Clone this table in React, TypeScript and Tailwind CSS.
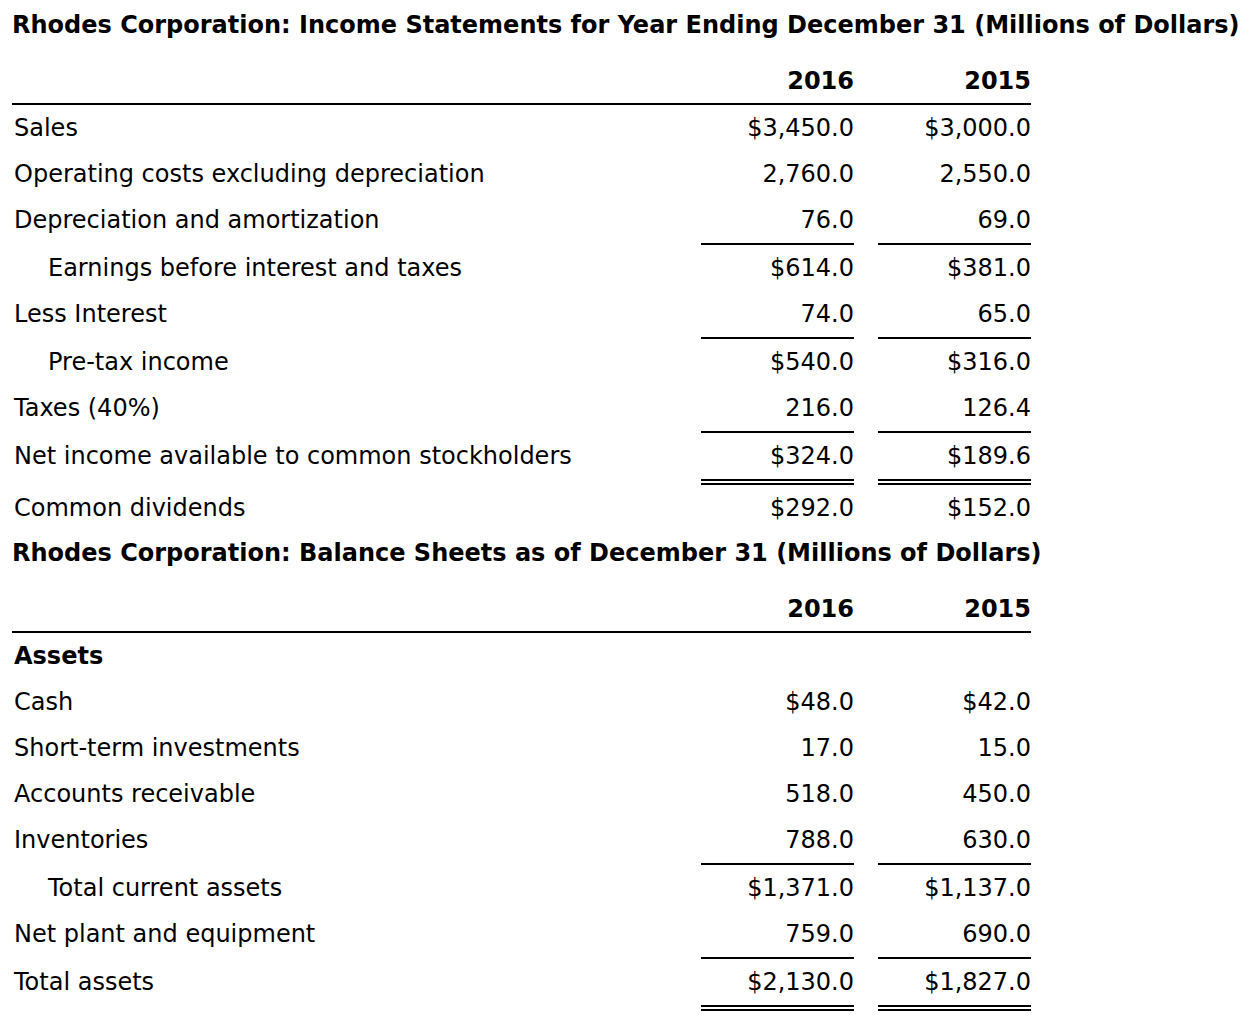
type Line = 'none' | 'single' | 'double';

interface Row {
  label: string;
  a?: string;
  b?: string;
  indent?: boolean;
  bold?: boolean;
  line?: Line;
}

const income: Row[] = [
  { label: 'Sales', a: '$3,450.0', b: '$3,000.0' },
  { label: 'Operating costs excluding depreciation', a: '2,760.0', b: '2,550.0' },
  { label: 'Depreciation and amortization', a: '76.0', b: '69.0', line: 'single' },
  { label: 'Earnings before interest and taxes', a: '$614.0', b: '$381.0', indent: true },
  { label: 'Less Interest', a: '74.0', b: '65.0', line: 'single' },
  { label: 'Pre-tax income', a: '$540.0', b: '$316.0', indent: true },
  { label: 'Taxes (40%)', a: '216.0', b: '126.4', line: 'single' },
  { label: 'Net income available to common stockholders', a: '$324.0', b: '$189.6', line: 'double' },
  { label: 'Common dividends', a: '$292.0', b: '$152.0' },
];

const balance: Row[] = [
  { label: 'Assets', bold: true },
  { label: 'Cash', a: '$48.0', b: '$42.0' },
  { label: 'Short-term investments', a: '17.0', b: '15.0' },
  { label: 'Accounts receivable', a: '518.0', b: '450.0' },
  { label: 'Inventories', a: '788.0', b: '630.0', line: 'single' },
  { label: 'Total current assets', a: '$1,371.0', b: '$1,137.0', indent: true },
  { label: 'Net plant and equipment', a: '759.0', b: '690.0', line: 'single' },
  { label: 'Total assets', a: '$2,130.0', b: '$1,827.0', line: 'double' },
];

const lineClass: Record<Line, string> = {
  none: '',
  single: 'border-b-2 border-black',
  double: 'border-b-[6px] border-double border-black',
};

function Cell({ value, line }: { value?: string; line: Line }) {
  return (
    <div className={`box-content h-[46px] w-[153px] flex items-center justify-end ${lineClass[line]}`}>
      {value}
    </div>
  );
}

function Table({ title, rows, gap }: { title: string; rows: Row[]; gap: string }) {
  return (
    <div>
      <div className="h-[44px] flex items-center font-bold whitespace-nowrap">{title}</div>
      <div className={`${gap} w-[1019px]`}>
        <div className="flex items-center h-[46px] border-b-2 border-black font-bold">
          <div className="flex-1" />
          <div className="w-[153px] text-right">2016</div>
          <div className="w-[153px] ml-[24px] text-right">2015</div>
        </div>
        {rows.map((r) => (
          <div key={r.label} className="flex items-start">
            <div
              className={`flex-1 h-[46px] flex items-center ${r.indent ? 'pl-[36px]' : 'pl-[2px]'} ${
                r.bold ? 'font-bold' : ''
              }`}
            >
              {r.label}
            </div>
            <Cell value={r.a} line={r.line ?? 'none'} />
            <div className="w-[24px]" />
            <Cell value={r.b} line={r.line ?? 'none'} />
          </div>
        ))}
      </div>
    </div>
  );
}

export default function App() {
  return (
    <div className="w-[1252px] h-[1020px] bg-white text-black pl-[12px] pt-[3px] font-['DejaVu_Sans',Verdana,sans-serif] text-[24px] overflow-hidden">
      <Table
        title="Rhodes Corporation: Income Statements for Year Ending December 31 (Millions of Dollars)"
        rows={income}
        gap="mt-[12px]"
      />
      <Table
        title="Rhodes Corporation: Balance Sheets as of December 31 (Millions of Dollars)"
        rows={balance}
        gap="mt-[12px]"
      />
    </div>
  );
}
